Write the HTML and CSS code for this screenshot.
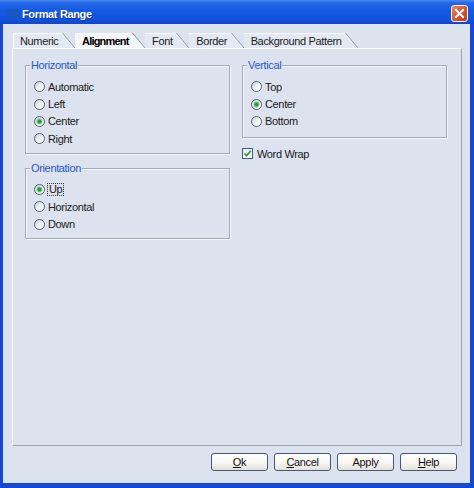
FILE: index.html
```html
<!DOCTYPE html>
<html>
<head>
<meta charset="utf-8">
<link rel="stylesheet" href="styles.css">
</head>
<body>
<div class="window">
  <div class="titlebar">
    <span class="app-icon"></span>
    <span class="title">Format Range</span>
    <span class="close"><svg width="15" height="15" viewBox="0 0 15 15"><path d="M4 4 L11 11 M11 4 L4 11" stroke="#fff" stroke-width="2" stroke-linecap="square"/></svg></span>
  </div>
  <div class="body">
    <div class="tabs">
      <div class="tab"><span class="tab-label">Numeric</span><svg class="slant" width="13" height="15" viewBox="0 0 13 15"><polygon class="slant-fill" points="0,0 0.5,0 13,15 0,15"/><line class="slant-hi" x1="-0.5" y1="1" x2="11.5" y2="15"/><line class="slant-line" x1="0.5" y1="0" x2="13" y2="15"/></svg></div>
      <div class="tab selected"><span class="tab-label">Alignment</span><svg class="slant" width="13" height="15" viewBox="0 0 13 15"><polygon class="slant-fill" points="0,0 0.5,0 13,15 0,15"/><line class="slant-hi" x1="-0.5" y1="1" x2="11.5" y2="15"/><line class="slant-line" x1="0.5" y1="0" x2="13" y2="15"/></svg></div>
      <div class="tab"><span class="tab-label">Font</span><svg class="slant" width="13" height="15" viewBox="0 0 13 15"><polygon class="slant-fill" points="0,0 0.5,0 13,15 0,15"/><line class="slant-hi" x1="-0.5" y1="1" x2="11.5" y2="15"/><line class="slant-line" x1="0.5" y1="0" x2="13" y2="15"/></svg></div>
      <div class="tab"><span class="tab-label">Border</span><svg class="slant" width="13" height="15" viewBox="0 0 13 15"><polygon class="slant-fill" points="0,0 0.5,0 13,15 0,15"/><line class="slant-hi" x1="-0.5" y1="1" x2="11.5" y2="15"/><line class="slant-line" x1="0.5" y1="0" x2="13" y2="15"/></svg></div>
      <div class="tab"><span class="tab-label">Background Pattern</span><svg class="slant" width="13" height="15" viewBox="0 0 13 15"><polygon class="slant-fill" points="0,0 0.5,0 13,15 0,15"/><line class="slant-hi" x1="-0.5" y1="1" x2="11.5" y2="15"/><line class="slant-line" x1="0.5" y1="0" x2="13" y2="15"/></svg></div>
    </div>
    <div class="panel">
      <div class="columns">
        <div class="col">
          <div class="group">
            <div class="legend">Horizontal</div>
            <div class="option"><span class="radio"></span><span>Automatic</span></div>
            <div class="option"><span class="radio"></span><span>Left</span></div>
            <div class="option"><span class="radio checked"></span><span>Center</span></div>
            <div class="option"><span class="radio"></span><span>Right</span></div>
          </div>
          <div class="group">
            <div class="legend">Orientation</div>
            <div class="option"><span class="radio checked"></span><span class="focus">Up</span></div>
            <div class="option"><span class="radio"></span><span>Horizontal</span></div>
            <div class="option"><span class="radio"></span><span>Down</span></div>
          </div>
        </div>
        <div class="col col-right">
          <div class="group group-tall">
            <div class="legend">Vertical</div>
            <div class="option"><span class="radio"></span><span>Top</span></div>
            <div class="option"><span class="radio checked"></span><span>Center</span></div>
            <div class="option"><span class="radio"></span><span>Bottom</span></div>
          </div>
          <div class="option check-row"><span class="checkbox"><svg width="9" height="9" viewBox="0 0 9 9"><path d="M1.5 4.5 L3.6 6.8 L7.8 1.8" fill="none" stroke="#22a02c" stroke-width="1.7"/></svg></span><span>Word Wrap</span></div>
        </div>
      </div>
    </div>
    <div class="buttons">
      <button class="btn"><u>O</u>k</button>
      <button class="btn"><u>C</u>ancel</button>
      <button class="btn">Apply</button>
      <button class="btn"><u>H</u>elp</button>
    </div>
  </div>
</div>
</body>
</html>
```

FILE: styles.css
```css
body {
  margin: 0;
  font-family: "Liberation Sans", Arial, sans-serif;
  font-size: 11px;
  letter-spacing: -0.35px;
  color: #1a1a1a;
}

.window {
  width: 474px;
  height: 488px;
  display: flex;
  flex-direction: column;
}

.titlebar {
  flex: none;
  height: 24px;
  box-sizing: border-box;
  padding: 3px 6px 0 7px;
  display: flex;
  align-items: center;
  background: linear-gradient(#4a8cf2 0%, #2367e6 12%, #1559e2 45%, #1252dc 80%, #0d47cc 100%);
}

.app-icon {
  width: 13px;
  height: 9px;
  margin-right: 2px;
  background: #1d5aa8;
  opacity: 0.55;
}

.title {
  flex: 1;
  color: #fff;
  font-weight: bold;
  text-shadow: 1px 1px 0 #0b34a8;
}

.close {
  width: 17px;
  height: 17px;
  box-sizing: border-box;
  border: 1px solid #f4f0ec;
  border-radius: 3px;
  background: linear-gradient(135deg, #ec8a64, #d8562e 50%, #c03c18);
  display: flex;
  align-items: center;
  justify-content: center;
}

.body {
  flex: 1;
  min-height: 0;
  display: flex;
  flex-direction: column;
  background: #dce3ee;
  border-style: solid;
  border-color: #1648d6;
  border-width: 0 4px 5px 3px;
  padding: 9px 8px 0 9px;
}

.tabs {
  flex: none;
  height: 15px;
  display: flex;
  margin-left: 1px;
}

.tab {
  display: flex;
}

.tab-label {
  padding: 1px 3.5px 0 7px;
  line-height: 13px;
  background: #e3e9f2;
  border-top: 1px solid #fbfcfe;
  white-space: nowrap;
}

.tab:first-child .tab-label {
  border-left: 1px solid #fbfcfe;
  padding-left: 6px;
}

.slant {
  display: block;
}

.slant-fill {
  fill: #e3e9f2;
}

.slant-line {
  stroke: #8e98a6;
  stroke-width: 1;
}

.slant-hi {
  stroke: #f7f9fc;
  stroke-width: 1;
}

.tab.selected .tab-label {
  background: #f3f6fa;
  font-weight: bold;
  letter-spacing: -0.8px;
  color: #000;
}

.tab.selected .slant-fill {
  fill: #f3f6fa;
}

.panel {
  flex: 1;
  min-height: 0;
  border: 1px solid;
  border-color: #fbfcfe #9aa2ae #9aa2ae #fbfcfe;
  padding: 16px 0 0 12px;
}

.columns {
  display: grid;
  grid-template-columns: 205px 205px;
  column-gap: 12px;
  align-items: start;
}

.col {
  display: flex;
  flex-direction: column;
  gap: 14px;
}

.col-right {
  gap: 7px;
}

.group {
  border: 1px solid #a3aab5;
  box-shadow: inset 1px 1px 0 #f4f6fa, 1px 1px 0 #f4f6fa;
  padding: 0 0 5px 8px;
}

.group-tall {
  padding-bottom: 7px;
}

.legend {
  width: fit-content;
  margin: -7px 0 6px -4px;
  padding: 0 1px;
  line-height: 13px;
  background: #dce3ee;
  color: #2a56c8;
}

.option {
  height: 17.4px;
  display: flex;
  align-items: center;
  gap: 3px;
}

.radio {
  width: 11px;
  height: 11px;
  box-sizing: border-box;
  border-radius: 50%;
  border: 1px solid #4f5f76;
  background: linear-gradient(135deg, #c9d0da, #ffffff 75%);
  flex: none;
}

.radio.checked {
  background: radial-gradient(circle, #2c9e38 0 1.8px, #8fd39a 2.4px 2.8px, transparent 3.3px), linear-gradient(135deg, #c9d0da, #ffffff 75%);
}

.focus {
  line-height: 11px;
  outline: 1px dotted #333;
  padding: 0 1px;
}

.check-row {
  gap: 4px;
}

.checkbox {
  width: 11px;
  height: 11px;
  box-sizing: border-box;
  border: 1px solid #3f5a80;
  background: linear-gradient(135deg, #e2e6ec, #ffffff 70%);
  display: flex;
  align-items: center;
  justify-content: center;
  flex: none;
}

.buttons {
  flex: none;
  display: flex;
  justify-content: flex-end;
  gap: 6px;
  margin: 7px 5px 12px 0;
}

.btn {
  width: 57px;
  height: 18px;
  padding: 0;
  border: 1px solid #44587a;
  border-radius: 3px;
  background: linear-gradient(#ffffff, #f6f6f2 55%, #e3e2da);
  font: inherit;
  letter-spacing: inherit;
  color: #111;
}
```
